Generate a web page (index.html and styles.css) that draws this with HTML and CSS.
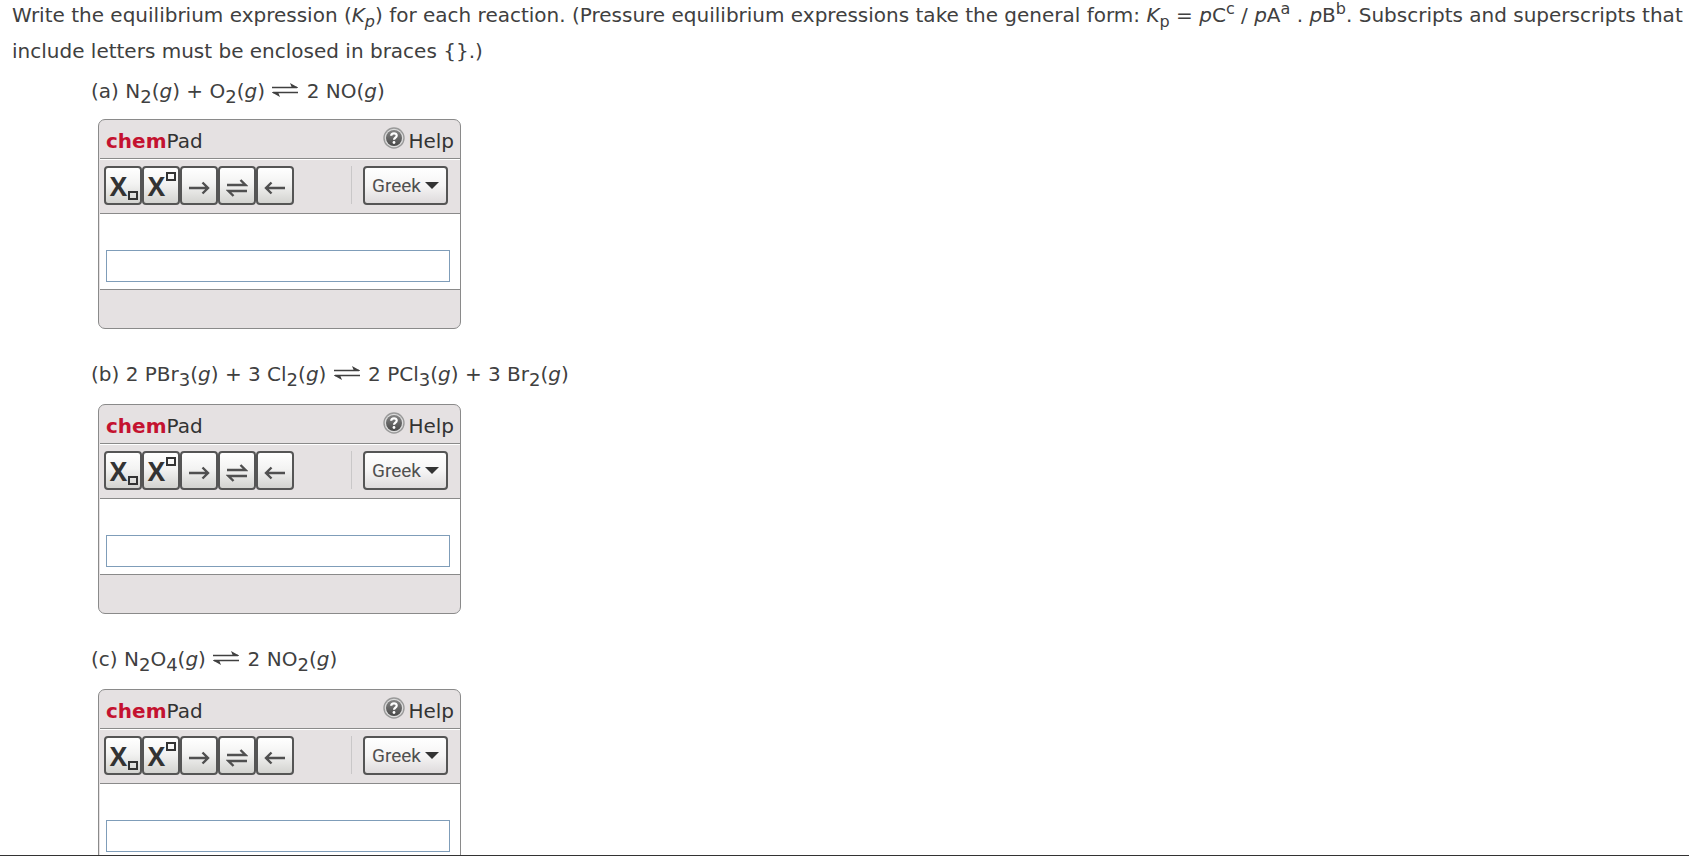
FILE: index.html
```html
<!DOCTYPE html>
<html lang="en">
<head>
<meta charset="utf-8">
<title>Equilibrium expressions</title>
<link rel="stylesheet" href="styles.css">
</head>
<body>
<svg class="defs" aria-hidden="true">
  <defs>
    <linearGradient id="ball" x1="0" y1="0" x2="0" y2="1"><stop offset="0" stop-color="#858585"/><stop offset="1" stop-color="#484848"/></linearGradient>
    <symbol id="equil" viewBox="0 0 26 16"><path d="M0 5.5H25M1 10.5H26" stroke="#404040" stroke-width="1.6" fill="none"/><path d="M18 1L26 5.5V6H20zM8 15L0 10.5V10H6z" fill="#404040"/></symbol>
    <symbol id="help" viewBox="0 0 22 22"><circle cx="11" cy="11" r="10" fill="#dcdcdc" stroke="#9a9a9a" stroke-width="1.4"/><circle cx="11" cy="11" r="8" fill="url(#ball)"/><path d="M8.200 8.800C8.300 5.400 13.900 5.500 13.700 8.700C13.600 10.600 11 10.700 11 12.800" fill="none" stroke="#fff" stroke-width="2.200"/><circle cx="11" cy="15.500" r="1.400" fill="#fff"/></symbol>
    <symbol id="right" viewBox="0 0 22 18"><path d="M1 9H20M14.500 3.500L20 9L14.500 14.500" fill="none" stroke="#505050" stroke-width="2.400"/></symbol>
    <symbol id="left" viewBox="0 0 22 18"><path d="M21 9H2M7.500 3.500L2 9L7.500 14.500" fill="none" stroke="#505050" stroke-width="2.400"/></symbol>
    <symbol id="both" viewBox="0 0 22 18"><path d="M1 6H19.500L14.500 1M21 12H2.500L7.500 17" fill="none" stroke="#505050" stroke-width="2.400"/></symbol>
  </defs>
</svg>
<main class="question">
  <p class="prompt">Write the equilibrium expression (<i>K<sub>p</sub></i>) for each reaction. (Pressure equilibrium expressions take the general form: <i>K</i><sub>p</sub> = <i>p</i>C<sup>c</sup> / <i>p</i>A<sup>a</sup> . <i>p</i>B<sup>b</sup>. Subscripts and superscripts that include letters must be enclosed in braces {}.)</p>

  <section class="part">
    <label class="reaction" for="answer-a">(a) N<sub>2</sub>(<i>g</i>) + O<sub>2</sub>(<i>g</i>) <svg class="equil" role="img" aria-label="in equilibrium with"><use href="#equil"/></svg> 2 NO(<i>g</i>)</label>
    <div class="pad">
      <header class="pad-head"><span><b class="brand">chem</b>Pad</span><a class="help" href="#"><svg class="help-icon" aria-hidden="true"><use href="#help"/></svg>Help</a></header>
      <div class="tools">
        <div class="group">
          <button class="tool" type="button" aria-label="Subscript"><span class="x">X</span><span class="box low"></span></button>
          <button class="tool" type="button" aria-label="Superscript"><span class="x">X</span><span class="box high"></span></button>
          <button class="tool" type="button" aria-label="Right arrow"><svg class="arrow"><use href="#right"/></svg></button>
          <button class="tool" type="button" aria-label="Equilibrium arrows"><svg class="arrow"><use href="#both"/></svg></button>
          <button class="tool" type="button" aria-label="Left arrow"><svg class="arrow"><use href="#left"/></svg></button>
        </div>
        <div class="menu"><button class="greek" type="button">Greek<span class="caret"></span></button></div>
      </div>
      <div class="entry"><input class="answer" id="answer-a" type="text"></div>
      <footer class="pad-foot"></footer>
    </div>
  </section>

  <section class="part">
    <label class="reaction" for="answer-b">(b) 2 PBr<sub>3</sub>(<i>g</i>) + 3 Cl<sub>2</sub>(<i>g</i>) <svg class="equil" role="img" aria-label="in equilibrium with"><use href="#equil"/></svg> 2 PCl<sub>3</sub>(<i>g</i>) + 3 Br<sub>2</sub>(<i>g</i>)</label>
    <div class="pad">
      <header class="pad-head"><span><b class="brand">chem</b>Pad</span><a class="help" href="#"><svg class="help-icon" aria-hidden="true"><use href="#help"/></svg>Help</a></header>
      <div class="tools">
        <div class="group">
          <button class="tool" type="button" aria-label="Subscript"><span class="x">X</span><span class="box low"></span></button>
          <button class="tool" type="button" aria-label="Superscript"><span class="x">X</span><span class="box high"></span></button>
          <button class="tool" type="button" aria-label="Right arrow"><svg class="arrow"><use href="#right"/></svg></button>
          <button class="tool" type="button" aria-label="Equilibrium arrows"><svg class="arrow"><use href="#both"/></svg></button>
          <button class="tool" type="button" aria-label="Left arrow"><svg class="arrow"><use href="#left"/></svg></button>
        </div>
        <div class="menu"><button class="greek" type="button">Greek<span class="caret"></span></button></div>
      </div>
      <div class="entry"><input class="answer" id="answer-b" type="text"></div>
      <footer class="pad-foot"></footer>
    </div>
  </section>

  <section class="part">
    <label class="reaction" for="answer-c">(c) N<sub>2</sub>O<sub>4</sub>(<i>g</i>) <svg class="equil" role="img" aria-label="in equilibrium with"><use href="#equil"/></svg> 2 NO<sub>2</sub>(<i>g</i>)</label>
    <div class="pad">
      <header class="pad-head"><span><b class="brand">chem</b>Pad</span><a class="help" href="#"><svg class="help-icon" aria-hidden="true"><use href="#help"/></svg>Help</a></header>
      <div class="tools">
        <div class="group">
          <button class="tool" type="button" aria-label="Subscript"><span class="x">X</span><span class="box low"></span></button>
          <button class="tool" type="button" aria-label="Superscript"><span class="x">X</span><span class="box high"></span></button>
          <button class="tool" type="button" aria-label="Right arrow"><svg class="arrow"><use href="#right"/></svg></button>
          <button class="tool" type="button" aria-label="Equilibrium arrows"><svg class="arrow"><use href="#both"/></svg></button>
          <button class="tool" type="button" aria-label="Left arrow"><svg class="arrow"><use href="#left"/></svg></button>
        </div>
        <div class="menu"><button class="greek" type="button">Greek<span class="caret"></span></button></div>
      </div>
      <div class="entry"><input class="answer" id="answer-c" type="text"></div>
      <footer class="pad-foot"></footer>
    </div>
  </section>
</main>
</body>
</html>
```
FILE: styles.css
```css
* { box-sizing: border-box; }
body {
  display: flow-root;
  margin: 0;
  height: 100vh;
  overflow: hidden;
  border-bottom: 1px solid #333;
  background: #fff;
  color: #404040;
  font: 20px/36px Verdana, "DejaVu Sans", sans-serif;
}
.defs { position: absolute; width: 0; height: 0; }
.question { padding-left: 12px; }
.prompt { margin: -3px 0 0; }
sub, sup { font-size: 16px; line-height: 0; }
.part { padding-left: 79px; margin-bottom: 25px; }
.reaction { display: block; height: 50px; line-height: 44px; }
.part + .part .reaction { line-height: 40px; }
.reaction sub { font-size: 18px; }
.equil { width: 26px; height: 16px; margin: 0 2px 0 1px; }
.pad {
  width: 363px;
  margin-left: 7px;
  padding-left: 1px;
  border: 1px solid #8a8a8a;
  border-radius: 7px;
  background: #e5e1e2;
  overflow: hidden;
}
.pad-head {
  display: flex;
  justify-content: space-between;
  height: 39px;
  padding: 3px 6px 0;
  border-bottom: 1px solid #8a8a8a;
  color: #333;
}
.brand { color: #c41230; }
.help { display: flex; gap: 3px; color: inherit; text-decoration: none; }
.help-icon { width: 22px; height: 22px; margin-top: 4px; }
.tools {
  display: flex;
  justify-content: space-between;
  height: 55px;
  padding: 6px 12px 0 4px;
  border-top: 1px solid #fff;
  border-bottom: 1px solid #8a8a8a;
}
.group { display: flex; }
.tool, .greek {
  height: 39px;
  padding: 0;
  border: 2px solid #555;
  border-radius: 4px;
  background: linear-gradient(#fff, #f3f3f2 45%, #d3d3d0);
  color: #333;
}
.tool { display: flex; align-items: center; justify-content: center; position: relative; width: 38px; }
.x { margin-right: 9px; font: bold 26px/34px "Open Sans", sans-serif; }
.box { position: absolute; right: 2px; width: 10px; height: 9px; border: 2px solid #333; }
.low { bottom: 3px; }
.high { top: 4px; }
.arrow { width: 22px; height: 18px; margin-top: 4px; }
.menu { height: 38px; padding-left: 11px; border-left: 1px solid #c9c7c8; }
.greek {
  display: flex;
  align-items: center;
  gap: 4px;
  padding: 0 7px;
  background: linear-gradient(#fff, #f6f5f5 50%, #dedbdc);
  color: #505050;
  font: 19px/24px Roboto, sans-serif;
}
.caret { border: 7px solid transparent; border-top-color: #333; border-bottom: 0; }
.entry { height: 76px; padding: 36px 10px 0 6px; border-bottom: 1px solid #8a8a8a; background: #fff; }
.answer { display: block; width: 100%; height: 32px; padding: 4px; border: 1px solid #7f9db9; border-radius: 0; background: #fff; font: inherit; }
.pad-foot { height: 38px; }
```
